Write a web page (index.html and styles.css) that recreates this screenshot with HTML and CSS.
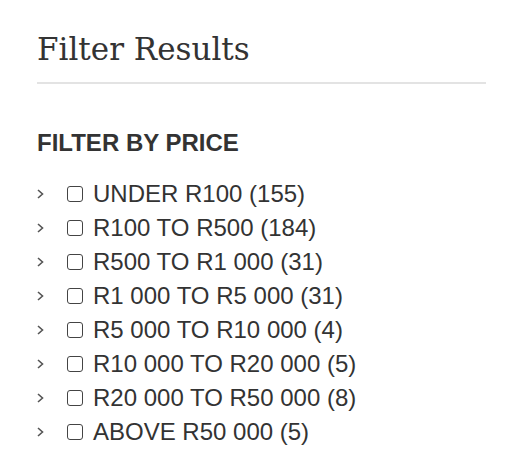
FILE: index.html
```
<!doctype html>
<html lang="en">
<head>
	<meta charset="UTF-8">
	<title>Filter Results</title>
	<link rel="stylesheet" href="styles.css">
</head>
<body>
	<div id="sidebar">
		<h2 class="title">Filter Results</h2>
		<div class="group">
			<h3 class="group-title">FILTER BY PRICE</h3>
			<ul class="options">
				<li><span class="arrow"><svg width="7" height="10" viewBox="0 0 7 10"><polyline points="1,1 5.5,5 1,9" fill="none" stroke="#555" stroke-width="1.6"/></svg></span><label><input type="checkbox" name="price" value="0-100">UNDER R100 (155)</label></li>
				<li><span class="arrow"><svg width="7" height="10" viewBox="0 0 7 10"><polyline points="1,1 5.5,5 1,9" fill="none" stroke="#555" stroke-width="1.6"/></svg></span><label><input type="checkbox" name="price" value="100-500">R100 TO R500 (184)</label></li>
				<li><span class="arrow"><svg width="7" height="10" viewBox="0 0 7 10"><polyline points="1,1 5.5,5 1,9" fill="none" stroke="#555" stroke-width="1.6"/></svg></span><label><input type="checkbox" name="price" value="500-1000">R500 TO R1 000 (31)</label></li>
				<li><span class="arrow"><svg width="7" height="10" viewBox="0 0 7 10"><polyline points="1,1 5.5,5 1,9" fill="none" stroke="#555" stroke-width="1.6"/></svg></span><label><input type="checkbox" name="price" value="1000-5000">R1 000 TO R5 000 (31)</label></li>
				<li><span class="arrow"><svg width="7" height="10" viewBox="0 0 7 10"><polyline points="1,1 5.5,5 1,9" fill="none" stroke="#555" stroke-width="1.6"/></svg></span><label><input type="checkbox" name="price" value="5000-10000">R5 000 TO R10 000 (4)</label></li>
				<li><span class="arrow"><svg width="7" height="10" viewBox="0 0 7 10"><polyline points="1,1 5.5,5 1,9" fill="none" stroke="#555" stroke-width="1.6"/></svg></span><label><input type="checkbox" name="price" value="10000-20000">R10 000 TO R20 000 (5)</label></li>
				<li><span class="arrow"><svg width="7" height="10" viewBox="0 0 7 10"><polyline points="1,1 5.5,5 1,9" fill="none" stroke="#555" stroke-width="1.6"/></svg></span><label><input type="checkbox" name="price" value="20000-50000">R20 000 TO R50 000 (8)</label></li>
				<li><span class="arrow"><svg width="7" height="10" viewBox="0 0 7 10"><polyline points="1,1 5.5,5 1,9" fill="none" stroke="#555" stroke-width="1.6"/></svg></span><label><input type="checkbox" name="price" value="50000">ABOVE R50 000 (5)</label></li>
			</ul>
		</div>
	</div>
</body>
</html>
```
FILE: styles.css
```
body {
	margin:0;
	background:#fff;
	color:#333;
	font-family:"Liberation Sans", Arial, sans-serif;
}

#sidebar {
	width:449px;
	padding:30px 0 0 37px;
}

h2.title {
	font:31px/38px "DejaVu Serif", Georgia, serif;
	color:#333;
	margin:0;
	padding-bottom:14px;
	border-bottom:2px solid #e3e3e3;
}

h3.group-title {
	font-size:24px;
	line-height:28px;
	font-weight:bold;
	margin:45px 0 20px;
}

ul.options {
	list-style:none;
	margin:0;
	padding:0;
}

ul.options li {
	display:flex;
	align-items:center;
	height:34px;
	font-size:24px;
}

span.arrow {
	display:flex;
	width:30px;
}

ul.options label {
	display:flex;
	align-items:center;
}

input[type="checkbox"] {
	appearance:none;
	-webkit-appearance:none;
	width:16px;
	height:16px;
	margin:0 10px 0 0;
	border:1.5px solid #444;
	border-radius:3px;
}
```
